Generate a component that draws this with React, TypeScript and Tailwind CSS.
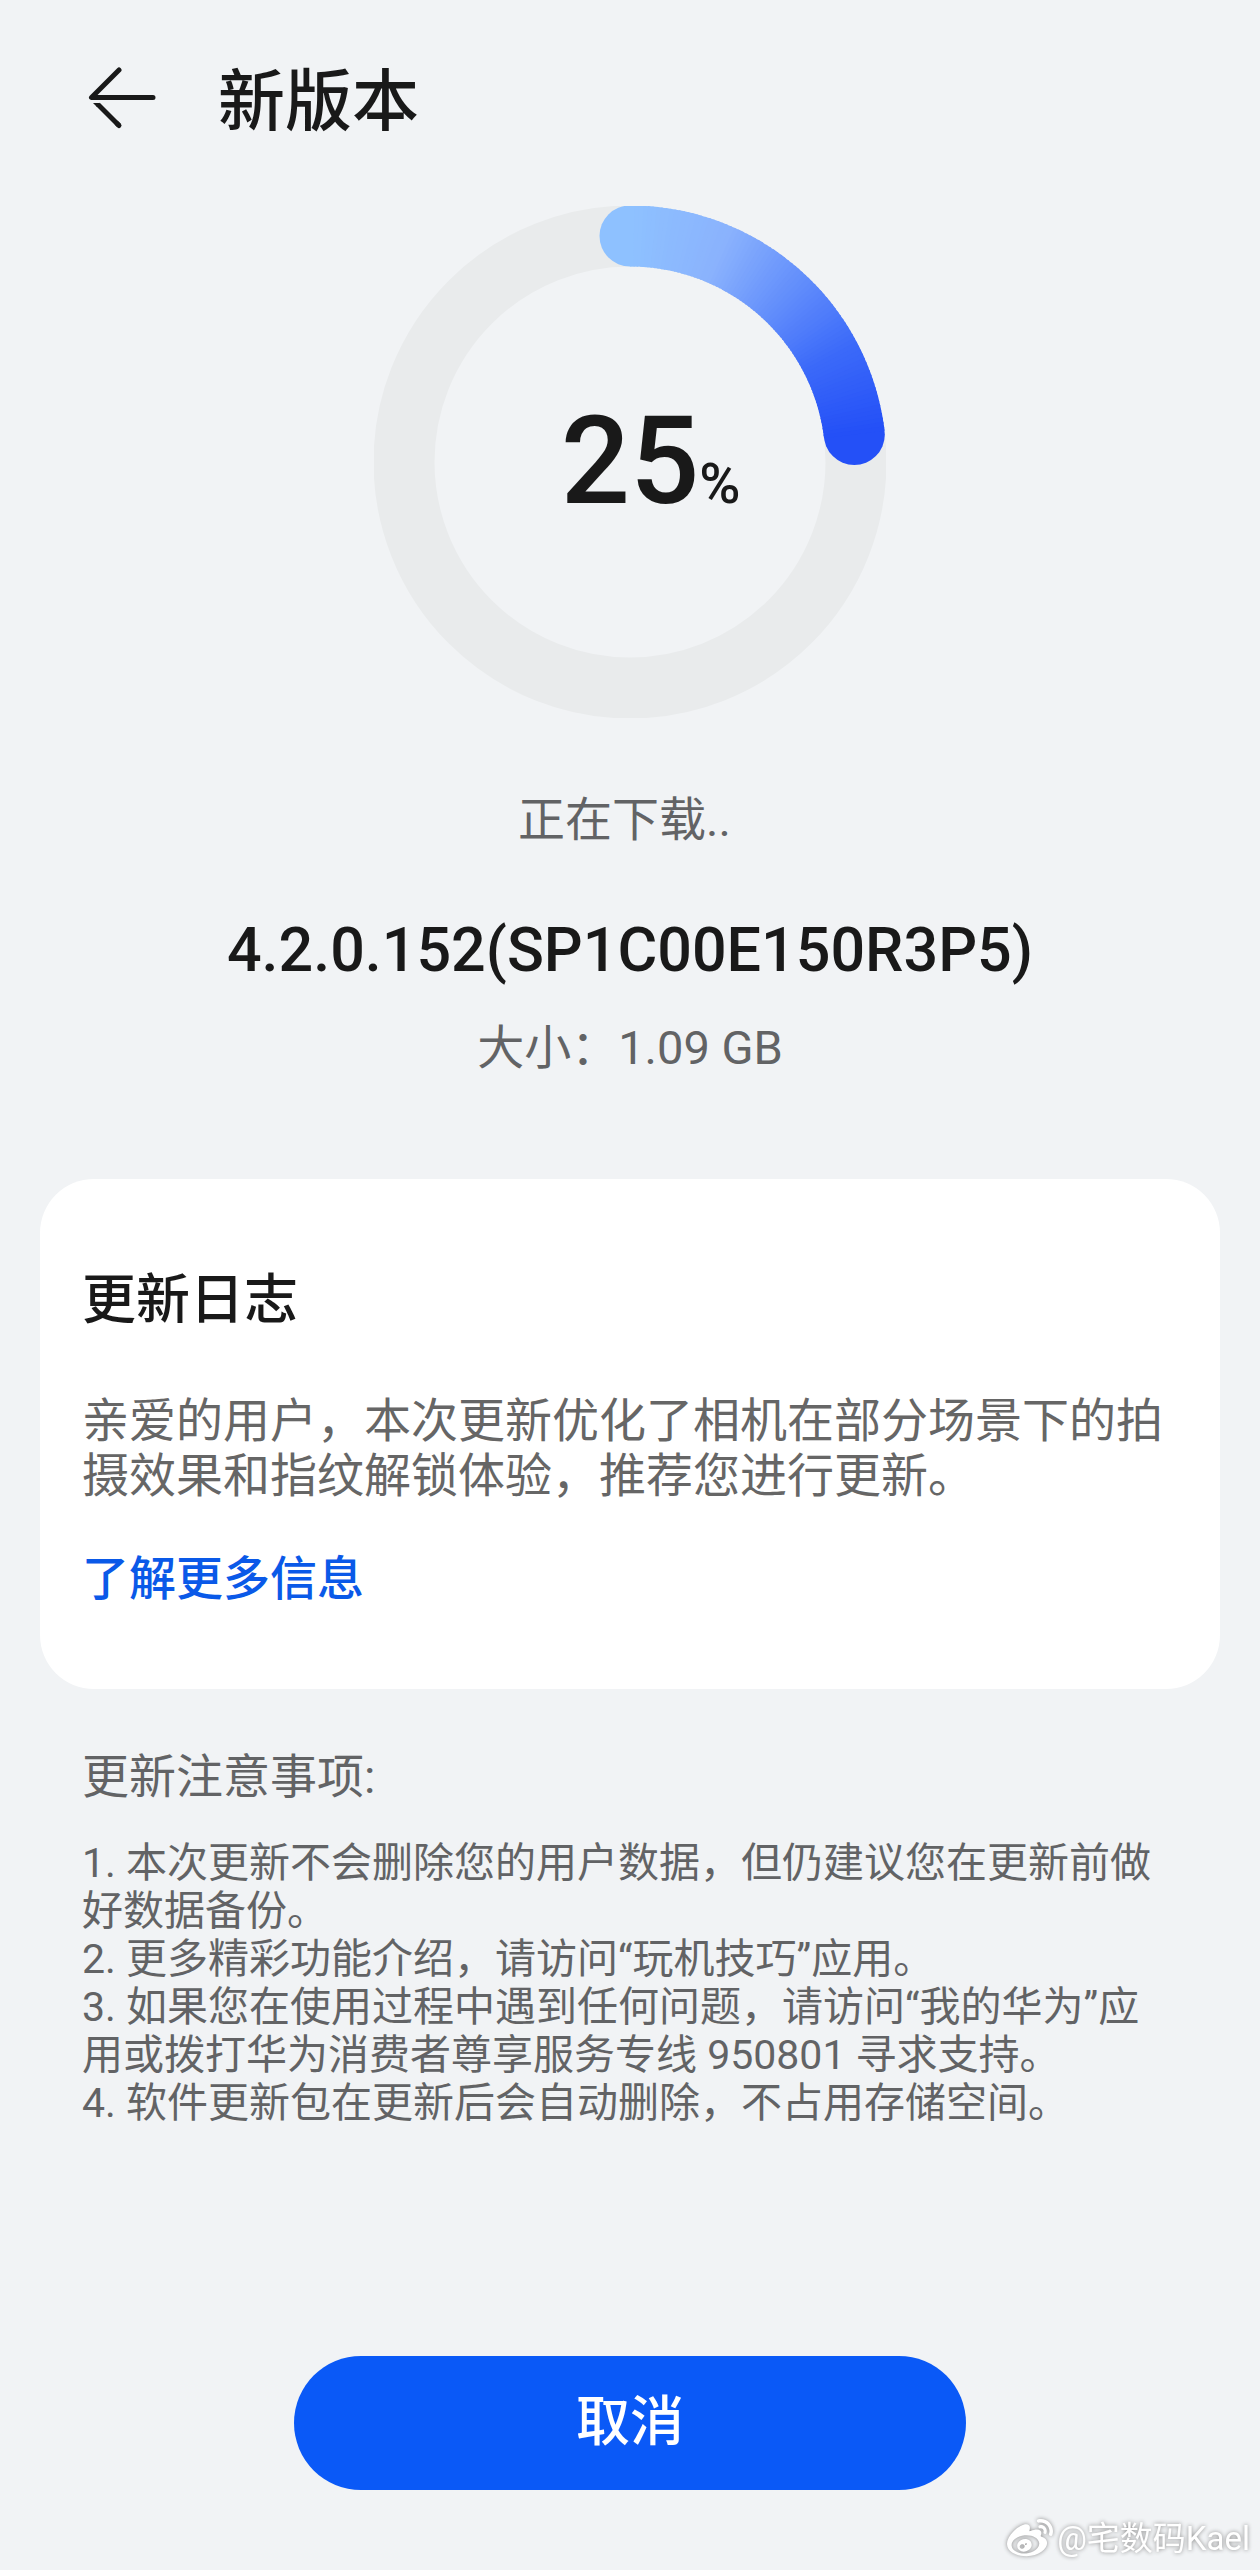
import React from "react";
import { FaWeibo } from "react-icons/fa";

const PROGRESS = 25;

const notes = [
  "本次更新不会删除您的用户数据，但仍建议您在更新前做好数据备份。",
  "更多精彩功能介绍，请访问“玩机技巧”应用。",
  "如果您在使用过程中遇到任何问题，请访问“我的华为”应用或拨打华为消费者尊享服务专线 950801 寻求支持。",
  "软件更新包在更新后会自动删除，不占用存储空间。",
];

// Colour stops along the progress arc
const stops = [
  { at: 0, rgb: [142, 193, 255] },
  { at: 0.28, rgb: [138, 178, 253] },
  { at: 0.55, rgb: [94, 138, 251] },
  { at: 0.75, rgb: [60, 106, 249] },
  { at: 1, rgb: [36, 80, 247] },
];

const colorAt = (t: number) => {
  const i = Math.max(1, stops.findIndex((s) => s.at >= t));
  const a = stops[i - 1];
  const b = stops[i];
  const k = (t - a.at) / (b.at - a.at);
  const mix = a.rgb.map((v, n) => Math.round(v + (b.rgb[n] - v) * k));
  return `rgb(${mix.join(",")})`;
};

const CENTER = 256;
const RADIUS = 226;
const STROKE = 61;
const SWEEP = 83;
const SEGMENTS = 83;

const pointAt = (deg: number) => {
  const rad = ((deg - 90) * Math.PI) / 180;
  return [CENTER + RADIUS * Math.cos(rad), CENTER + RADIUS * Math.sin(rad)];
};

const ProgressRing = ({ value }: { value: number }) => {
  const [sx, sy] = pointAt(0);
  const [ex, ey] = pointAt(SWEEP);

  return (
    <div
      className="relative flex size-[512px] items-center justify-center"
      role="progressbar"
      aria-valuenow={value}
      aria-valuemin={0}
      aria-valuemax={100}
    >
      <svg className="absolute inset-0 size-full" viewBox="0 0 512 512" fill="none">
        <circle cx={CENTER} cy={CENTER} r={RADIUS} stroke="#e9ebec" strokeWidth={STROKE} />
        <circle cx={sx} cy={sy} r={STROKE / 2} fill={colorAt(0)} />
        <circle cx={ex} cy={ey} r={STROKE / 2} fill={colorAt(1)} />
        {Array.from({ length: SEGMENTS }, (_, i) => {
          const from = (SWEEP * i) / SEGMENTS;
          const to = Math.min(SWEEP, (SWEEP * (i + 1)) / SEGMENTS + 0.4);
          const [x1, y1] = pointAt(from);
          const [x2, y2] = pointAt(to);
          return (
            <path
              key={i}
              d={`M${x1} ${y1}A${RADIUS} ${RADIUS} 0 0 1 ${x2} ${y2}`}
              stroke={colorAt(i / (SEGMENTS - 1))}
              strokeWidth={STROKE}
            />
          );
        })}
      </svg>
      <div className="relative text-[122px] leading-none font-medium">
        {value}
        <span className="absolute bottom-[11px] left-full text-[56px] leading-none">%</span>
      </div>
    </div>
  );
};

const BackIcon = () => (
  <svg className="h-16 w-[68px]" viewBox="0 0 68 64" fill="none" stroke="currentColor" strokeWidth="5" strokeLinecap="round">
    <path d="M31 4 3.500 31.500H65" strokeLinejoin="round" />
    <path d="M31 59.500 10 38.500" strokeLinecap="butt" />
    <path d="M31 59.500 29 57.500" />
    <path d="M5 37h6l4 4h-6z" fill="currentColor" stroke="none" />
  </svg>
);

export default function App() {
  return (
    <div className="relative flex min-h-screen flex-col bg-[#f1f3f5] font-[Roboto,'Noto_Sans_CJK_SC',sans-serif] text-[#191919]">
      <header className="flex items-start gap-[62px] px-[88px] pt-[62px]">
        <button type="button" aria-label="返回" className="pt-1">
          <BackIcon />
        </button>
        <h1 className="text-[67px] leading-[80px] font-medium">新版本</h1>
      </header>

      <main className="flex flex-1 flex-col px-10">
        <section className="flex flex-col items-center pt-16">
          <ProgressRing value={PROGRESS} />
          <p className="mt-[74px] w-[224px] text-[47px] leading-[56px] whitespace-nowrap text-[#626365]">正在下载..</p>
          <h2 className="mt-[62px] text-[61px] leading-[80px] font-medium">4.2.0.152(SP1C00E150R3P5)</h2>
          <p className="mt-[30px] text-[47px] leading-[56px] text-[#626365]">大小：1.09 GB</p>
        </section>

        <section className="mt-[103px] rounded-[54px] bg-white px-[42px] pt-[90px] pb-[82px]">
          <h2 className="text-[54px] leading-[64px] font-medium">更新日志</h2>
          <p className="mt-[60px] text-[47px] leading-[55px] text-[#666666]">
            亲爱的用户，本次更新优化了相机在部分场景下的拍摄效果和指纹解锁体验，推荐您进行更新。
          </p>
          <a href="#more" className="mt-[48px] block text-[47px] leading-[56px] font-medium text-[#0a59e8]">
            了解更多信息
          </a>
        </section>

        <section className="px-[42px] pt-[60px] text-[#626365]">
          <h3 className="text-[47px] leading-[56px]">更新注意事项:</h3>
          <ol className="mt-[34px] text-[41px] leading-[48px]">
            {notes.map((note, i) => (
              <li key={note}>{`${i + 1}. ${note}`}</li>
            ))}
          </ol>
        </section>
      </main>

      <footer className="flex justify-center pt-16 pb-20">
        <button
          type="button"
          className="h-[134px] w-[672px] rounded-full bg-[#0a59f7] text-[54px] leading-[64px] font-medium text-white"
        >
          取消
        </button>
      </footer>

      <div className="absolute right-[10px] bottom-2 flex items-center gap-1 text-[33px] leading-[44px] text-white [filter:drop-shadow(0_0_2px_#888)]">
        <FaWeibo className="size-[46px]" />
        <span>@宅数码Kael</span>
      </div>
    </div>
  );
}
